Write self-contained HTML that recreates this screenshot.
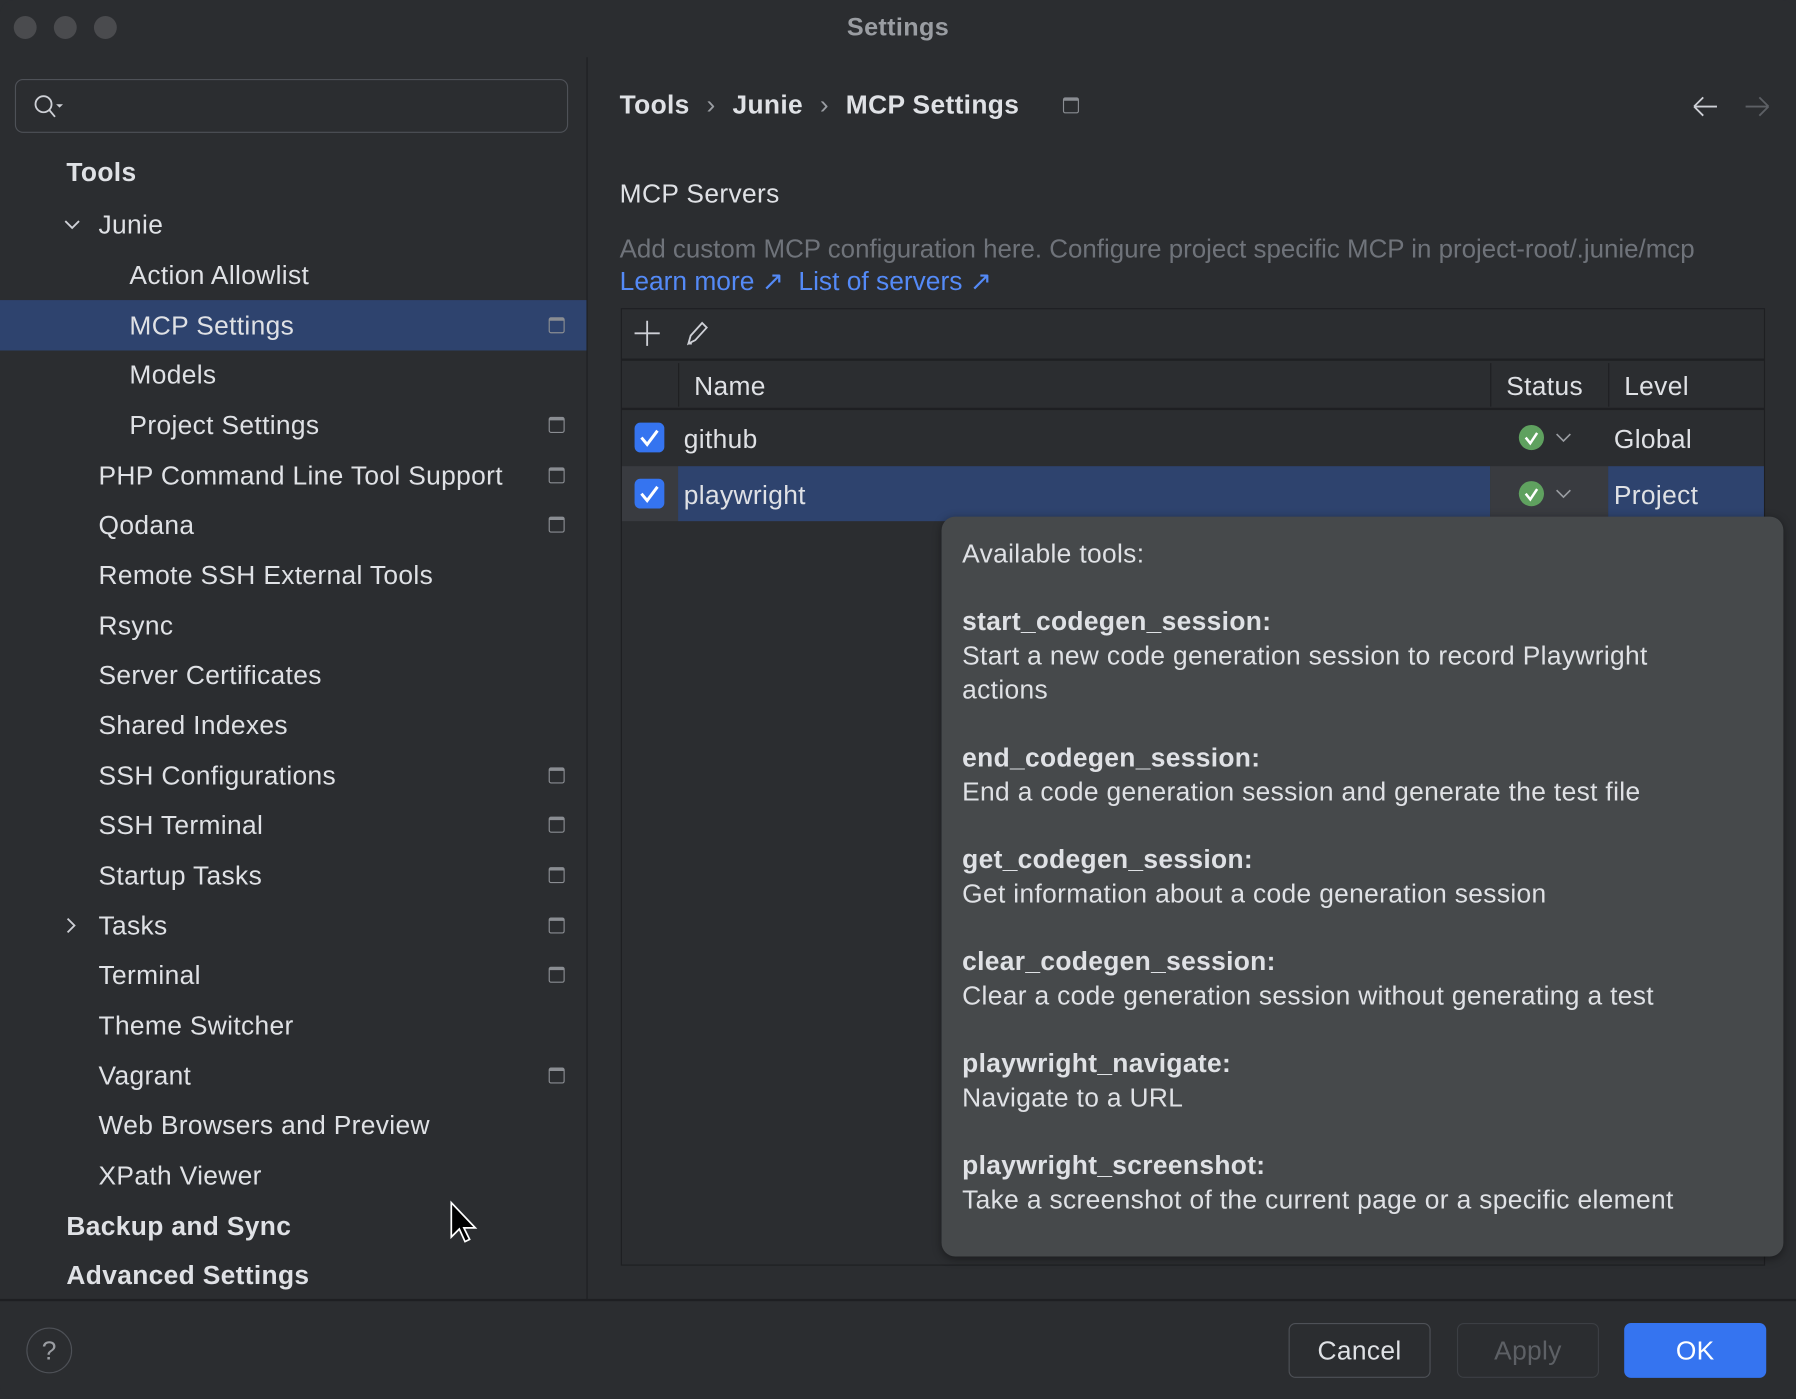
<!DOCTYPE html>
<html><head><meta charset="utf-8"><style>
html,body{margin:0;padding:0;background:#2b2d30;overflow:hidden;width:1796px;height:1398px}
#w{position:absolute;left:0;top:0;width:1568px;height:1221px;transform:scale(1.14541);transform-origin:0 0;background:#2b2d30;font-family:"Liberation Sans",sans-serif;color:#dfe1e5;font-size:23px;letter-spacing:0.3px;border-radius:12px;overflow:hidden}
.a{position:absolute;white-space:nowrap}
.dot{position:absolute;top:14px;width:20px;height:20px;border-radius:50%;background:#4a4b4e}
.ti{position:absolute;left:0;width:512px;height:44px;line-height:44px}
.ti span{position:absolute}
.pin{position:absolute;width:12px;height:10px;border:1.5px solid #8a8d92;border-radius:2px;border-top-width:3px}
.b{font-weight:bold}
.tt b{display:block;font-weight:bold}
.tt div{margin-bottom:29px}
.cb{position:absolute;width:26px;height:26px;border-radius:5px;background:#3574f0}
.ok{position:absolute;width:22px;height:22px;border-radius:50%;background:#5fa15f}
.btn{position:absolute;top:1155px;width:124px;height:48px;border:1.5px solid #4e5157;border-radius:6px;text-align:center;line-height:46px;box-sizing:border-box}
</style></head><body><div id="w">
<div class="dot" style="left:12px"></div><div class="dot" style="left:47px"></div><div class="dot" style="left:82px"></div>
<div class="a b" style="left:0;width:1568px;text-align:center;top:11px;color:#9a9da2;font-size:22px">Settings</div>
<div class="a" style="left:512px;top:50px;width:1px;height:1085px;background:#1e1f22"></div>
<div class="a" style="left:13px;top:69px;width:481px;height:45px;border:1.5px solid #4e5157;border-radius:7px"></div>
<svg class="a" style="left:28px;top:81px" width="32" height="24"><circle cx="10" cy="10" r="7" fill="none" stroke="#ced0d6" stroke-width="1.6"/><path d="M15 15l5 6" stroke="#ced0d6" stroke-width="1.6"/><path d="M21 10h6l-3 3z" fill="#ced0d6"/></svg>
<div class="ti" style="top:128px"><span class="b" style="left:58px">Tools</span></div>
<div class="ti" style="top:174px"><svg class="a" style="left:55px;top:16px" width="16" height="12"><path d="M2 3l6 6 6-6" stroke="#ced0d6" stroke-width="1.6" fill="none"/></svg><span style="left:86px">Junie</span></div>
<div class="ti" style="top:218px"><span style="left:113px">Action Allowlist</span></div>
<div class="ti" style="top:262px;background:#2e436e"><span style="left:113px">MCP Settings</span><i class="pin" style="left:479px;top:15px"></i></div>
<div class="ti" style="top:305px"><span style="left:113px">Models</span></div>
<div class="ti" style="top:349px"><span style="left:113px">Project Settings</span><i class="pin" style="left:479px;top:15px"></i></div>
<div class="ti" style="top:393px"><span style="left:86px">PHP Command Line Tool Support</span><i class="pin" style="left:479px;top:15px"></i></div>
<div class="ti" style="top:436px"><span style="left:86px">Qodana</span><i class="pin" style="left:479px;top:15px"></i></div>
<div class="ti" style="top:480px"><span style="left:86px">Remote SSH External Tools</span></div>
<div class="ti" style="top:524px"><span style="left:86px">Rsync</span></div>
<div class="ti" style="top:567px"><span style="left:86px">Server Certificates</span></div>
<div class="ti" style="top:611px"><span style="left:86px">Shared Indexes</span></div>
<div class="ti" style="top:655px"><span style="left:86px">SSH Configurations</span><i class="pin" style="left:479px;top:15px"></i></div>
<div class="ti" style="top:698px"><span style="left:86px">SSH Terminal</span><i class="pin" style="left:479px;top:15px"></i></div>
<div class="ti" style="top:742px"><span style="left:86px">Startup Tasks</span><i class="pin" style="left:479px;top:15px"></i></div>
<div class="ti" style="top:786px"><svg class="a" style="left:56px;top:14px" width="12" height="16"><path d="M3 2l6 6-6 6" stroke="#ced0d6" stroke-width="1.6" fill="none"/></svg><span style="left:86px">Tasks</span><i class="pin" style="left:479px;top:15px"></i></div>
<div class="ti" style="top:829px"><span style="left:86px">Terminal</span><i class="pin" style="left:479px;top:15px"></i></div>
<div class="ti" style="top:873px"><span style="left:86px">Theme Switcher</span></div>
<div class="ti" style="top:917px"><span style="left:86px">Vagrant</span><i class="pin" style="left:479px;top:15px"></i></div>
<div class="ti" style="top:960px"><span style="left:86px">Web Browsers and Preview</span></div>
<div class="ti" style="top:1004px"><span style="left:86px">XPath Viewer</span></div>
<div class="ti" style="top:1048px"><span class="b" style="left:58px">Backup and Sync</span></div>
<div class="ti" style="top:1091px"><span class="b" style="left:58px">Advanced Settings</span></div>
<svg class="a" style="left:392px;top:1048px" width="26" height="40"><path d="M2 2v30l7-7 5 11 4-2-5-10h10z" fill="#000" stroke="#fff" stroke-width="1.5"/></svg>

<div class="a b" style="left:541px;top:78px">Tools <span style="color:#9a9da2;font-weight:normal;margin:0 8px">›</span> Junie <span style="color:#9a9da2;font-weight:normal;margin:0 8px">›</span> MCP Settings</div>
<i class="pin" style="left:928px;top:85px"></i>
<svg class="a" style="left:1477px;top:82px" width="70" height="22"><path d="M2 11h20M2 11l8-8M2 11l8 8" stroke="#ced0d6" stroke-width="1.6" fill="none"/><path d="M47 11h20M67 11l-8-8M67 11l-8 8" stroke="#5d6065" stroke-width="1.6" fill="none"/></svg>
<div class="a" style="left:541px;top:156px">MCP Servers</div>
<div class="a" style="left:541px;top:205px;color:#6f737a;letter-spacing:0;font-size:22.6px">Add custom MCP configuration here. Configure project specific MCP in project-root/.junie/mcp</div>
<div class="a" style="left:541px;top:232px;color:#548af7;letter-spacing:0">Learn more ↗&nbsp; List of servers ↗</div>

<div class="a" style="left:542px;top:269px;width:997px;height:834px;border:1.5px solid #1e1f22"></div>
<svg class="a" style="left:552px;top:278px" width="80" height="26"><path d="M13 2v22M2 13h22" stroke="#ced0d6" stroke-width="1.6"/><path d="M49 22l2-7 10-11 4 4-10 11z M49 22h3" stroke="#ced0d6" stroke-width="1.6" fill="none"/></svg>
<div class="a" style="left:543px;top:313px;width:997px;height:2px;background:#1e1f22"></div>
<div class="a" style="left:592px;top:317px;width:1px;height:38px;background:#1e1f22"></div>
<div class="a" style="left:1301px;top:317px;width:1px;height:38px;background:#1e1f22"></div>
<div class="a" style="left:1404px;top:317px;width:1px;height:38px;background:#1e1f22"></div>
<div class="a" style="left:606px;top:324px">Name</div>
<div class="a" style="left:1315px;top:324px">Status</div>
<div class="a" style="left:1418px;top:324px">Level</div>
<div class="a" style="left:543px;top:356px;width:997px;height:2px;background:#1e1f22"></div>
<div class="cb" style="left:554px;top:369px"></div>
<svg class="a" style="left:554px;top:369px" width="26" height="26"><path d="M6 13l5 6 9-12" stroke="#fff" stroke-width="2.6" fill="none"/></svg>
<div class="a" style="left:597px;top:370px">github</div>
<div class="ok" style="left:1326px;top:371px"></div><svg class="a" style="left:1326px;top:371px" width="22" height="22"><path d="M6 11l4 5 6-9" stroke="#fff" stroke-width="2.2" fill="none"/></svg>
<svg class="a" style="left:1358px;top:377px" width="14" height="10"><path d="M1 2l6 6 6-6" stroke="#9a9da2" stroke-width="1.4" fill="none"/></svg>
<div class="a" style="left:1409px;top:370px">Global</div>
<div class="a" style="left:543px;top:407px;width:49px;height:48px;background:#393b40"></div>
<div class="a" style="left:592px;top:407px;width:709px;height:48px;background:#2e436e"></div>
<div class="a" style="left:1301px;top:407px;width:103px;height:48px;background:#393b40"></div>
<div class="a" style="left:1404px;top:407px;width:136px;height:48px;background:#2e436e"></div>
<div class="cb" style="left:554px;top:418px"></div>
<svg class="a" style="left:554px;top:418px" width="26" height="26"><path d="M6 13l5 6 9-12" stroke="#fff" stroke-width="2.6" fill="none"/></svg>
<div class="a" style="left:597px;top:419px">playwright</div>
<div class="ok" style="left:1326px;top:420px"></div><svg class="a" style="left:1326px;top:420px" width="22" height="22"><path d="M6 11l4 5 6-9" stroke="#fff" stroke-width="2.2" fill="none"/></svg>
<svg class="a" style="left:1358px;top:426px" width="14" height="10"><path d="M1 2l6 6 6-6" stroke="#9a9da2" stroke-width="1.4" fill="none"/></svg>
<div class="a" style="left:1409px;top:419px">Project</div>

<div class="a tt" style="left:822px;top:451px;width:735px;height:646px;background:#46494b;border-radius:12px;box-shadow:0 2px 8px rgba(0,0,0,.4);line-height:30px;padding:17px 70px 17px 18px;box-sizing:border-box;white-space:normal">
<div>Available tools:</div>
<div><b>start_codegen_session:</b>Start a new code generation session to record Playwright actions</div>
<div><b>end_codegen_session:</b>End a code generation session and generate the test file</div>
<div><b>get_codegen_session:</b>Get information about a code generation session</div>
<div><b>clear_codegen_session:</b>Clear a code generation session without generating a test</div>
<div><b>playwright_navigate:</b>Navigate to a URL</div>
<div style="white-space:nowrap"><b>playwright_screenshot:</b>Take a screenshot of the current page or a specific element</div>
</div>

<div class="a" style="left:0;top:1134px;width:1568px;height:2px;background:#1e1f22"></div>
<div class="a" style="left:23px;top:1159px;width:38px;height:38px;border:1.5px solid #4e5157;border-radius:50%;text-align:center;line-height:38px;color:#9a9da2">?</div>
<div class="btn" style="left:1125px">Cancel</div>
<div class="btn" style="left:1272px;color:#5d6065;border-color:#3c3f44">Apply</div>
<div class="btn" style="left:1418px;background:#3574f0;border-color:#3574f0;color:#fff">OK</div>
</div></body></html>
